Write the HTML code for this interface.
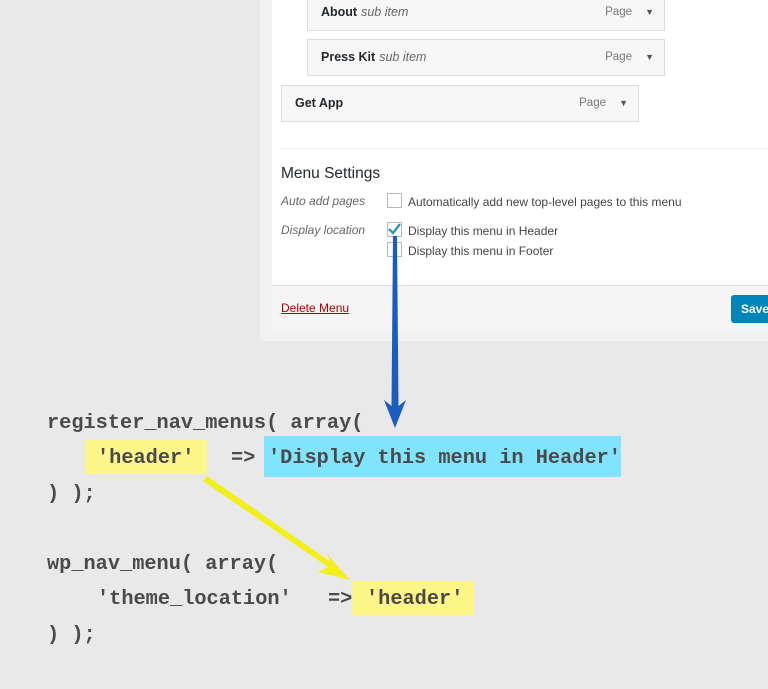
<!DOCTYPE html>
<html><head><meta charset="utf-8"><style>
*{margin:0;padding:0;box-sizing:border-box}
body{width:768px;height:689px;background:#e9e9e9;position:relative;overflow:hidden;font-family:"Liberation Sans",sans-serif}
.a{position:absolute}
.item{position:absolute;background:#f7f7f7;border:1px solid #dcdcdc;height:37px;font-size:12.5px;color:#23282d;font-weight:bold;line-height:35px;padding-left:13px}
.item i{font-weight:normal;color:#666;margin-left:4px}
.item .pg{position:absolute;right:32px;top:0;font-weight:normal;color:#777;font-size:11.5px}
.item .ar{position:absolute;right:10px;top:0;font-size:9px;color:#555}
.cb{position:absolute;width:15px;height:15px;border:1px solid #b4b9be;background:#fff}
.lbl{position:absolute;font-size:12px;color:#444}
.code{position:absolute;font-family:"Liberation Mono",monospace;font-weight:bold;font-size:20.3px;color:#4a4a4a;white-space:pre;line-height:24px}
</style></head><body>
<div class="a" style="left:260px;top:0;width:508px;height:341px;background:#f1f1f1"></div>
<div class="a" style="left:272px;top:0;width:496px;height:333px;background:#fff;border-bottom:1px solid #ddd"></div>
<div class="a" style="left:272px;top:285px;width:496px;height:48px;background:#f5f5f5;border-top:1px solid #ddd"></div>
<div class="item" style="left:307px;top:-6px;width:358px">About<i>sub item</i><span class="pg">Page</span><span class="ar">▼</span></div>
<div class="item" style="left:307px;top:39px;width:358px">Press Kit<i>sub item</i><span class="pg">Page</span><span class="ar">▼</span></div>
<div class="item" style="left:281px;top:85px;width:358px">Get App<span class="pg">Page</span><span class="ar">▼</span></div>
<div class="a" style="left:281px;top:148px;width:487px;height:1px;background:#eee"></div>
<div class="a" style="left:281px;top:165px;font-size:15.5px;color:#23282d">Menu Settings</div>
<div class="lbl" style="left:281px;top:194px;font-style:italic;color:#666">Auto add pages</div>
<div class="lbl" style="left:281px;top:223px;font-style:italic;color:#666">Display location</div>
<div class="cb" style="left:387px;top:193px"></div>
<div class="lbl" style="left:408px;top:195px">Automatically add new top-level pages to this menu</div>
<div class="cb" style="left:387px;top:222px"></div>
<div class="lbl" style="left:408px;top:224px">Display this menu in Header</div>
<div class="cb" style="left:387px;top:242px"></div>
<div class="lbl" style="left:408px;top:244px">Display this menu in Footer</div>
<svg class="a" style="left:0;top:0" width="768" height="689">
<path d="M389 229 l4 4 l7 -9" stroke="#1e8cbe" stroke-width="2.2" fill="none"/>
</svg>
<div class="a" style="left:281px;top:301px;font-size:12px;color:#a00;text-decoration:underline">Delete Menu</div>
<div class="a" style="left:731px;top:295px;width:50px;height:28px;background:#0085ba;border-radius:3px;color:#fff;font-size:12px;font-weight:bold;line-height:28px;padding-left:10px">Save</div>
<div class="a" style="left:85px;top:440px;width:122px;height:34px;background:#fff68a"></div>
<div class="a" style="left:264px;top:436px;width:357px;height:41px;background:#80e4fe"></div>
<div class="a" style="left:352px;top:581px;width:122px;height:34px;background:#fff68a"></div>
<div class="code" style="left:47px;top:412px">register_nav_menus( array(</div>
<div class="code" style="left:97px;top:447px">'header'</div>
<div class="code" style="left:231px;top:447px">=></div>
<div class="code" style="left:268px;top:447px">'Display this menu in Header'</div>
<div class="code" style="left:47px;top:483px">) );</div>
<div class="code" style="left:47px;top:553px">wp_nav_menu( array(</div>
<div class="code" style="left:97px;top:588px">'theme_location'</div>
<div class="code" style="left:328px;top:588px">=></div>
<div class="code" style="left:366px;top:588px">'header'</div>
<div class="code" style="left:47px;top:624px">) );</div>
<svg class="a" style="left:0;top:0" width="768" height="689">
<path d="M393 236 L397 236 L398.5 406 L406 400 L395 428 L384 400 L391.5 406 Z" fill="#1a5dc0"/>
<path d="M207 476 L331 562 L326 553 L350 580 L318 572 L328 567 L203 481 Z" fill="#f2ef1a"/>
</svg>
</body></html>
